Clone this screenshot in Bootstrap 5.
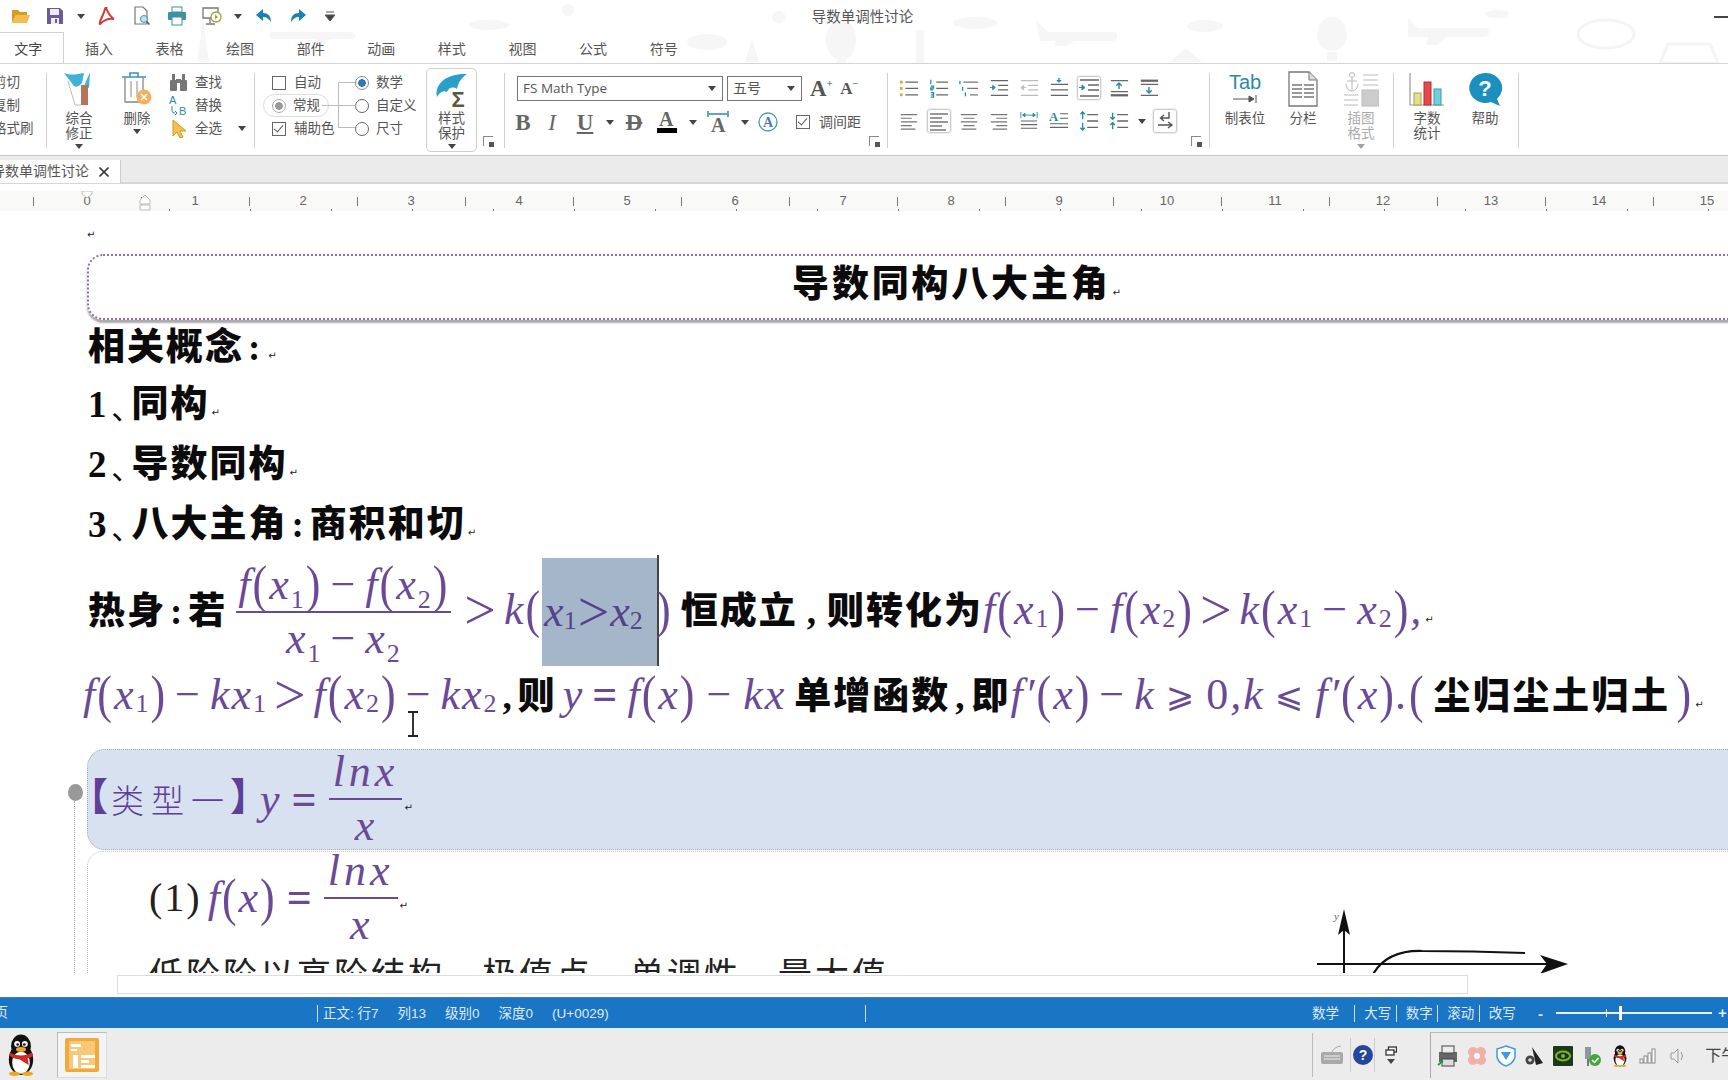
<!DOCTYPE html>
<html lang="zh">
<head>
<meta charset="utf-8">
<title>导数单调性讨论</title>
<link rel="stylesheet" href="https://cdn.jsdelivr.net/npm/bootstrap@5.3.0/dist/css/bootstrap.min.css">
<style>
html,body{margin:0;height:1080px;overflow:hidden;background:#fff}
body{width:1728px;font-family:"Liberation Sans","Noto Sans CJK SC",sans-serif;color:#555;font-size:14px;display:flex;flex-direction:column}
svg{display:block;flex:none}
.cell{display:flex;align-items:center;justify-content:center;flex:none}
/* title */
.wtop{height:63px;position:relative;flex:none;background:#fff;overflow:hidden}
.sky{position:absolute;left:0;top:0}
.qbar{height:32px;display:flex;padding-left:4px;position:relative}
.w12{width:12px}.w18{width:18px}.w20{width:20px}.w26{width:26px}.w28{width:28px}.w34{width:34px}.w36{width:36px}.w38{width:38px}.w40{width:40px}.w42{width:42px}.w46{width:46px}
.ml2{margin-left:2px}.ml4{margin-left:4px}.ml7{margin-left:7px}.ml9{margin-left:9px}.ml11{margin-left:11px}.ml18{margin-left:18px}
.wtitle{position:absolute;left:0;right:0;top:7px;text-align:center;font-size:14.5px;color:#555;padding-right:3px}
.wmin{position:absolute;right:0;top:16px;width:14px;height:2px;background:#444}
.car{width:0;height:0;border-left:4px solid transparent;border-right:4px solid transparent;border-top:5px solid #444;flex:none}
.tabs{--bs-nav-tabs-border-width:0;height:31px;position:relative;flex-wrap:nowrap;border:0}
.tabs .nav-item{width:70.6px;flex:none}
.tabs .nav-item:first-child{margin-left:-7px}
.tabs .nav-link{padding:7px 0 0;height:31px;text-align:center;color:#555;font-size:14px;border:0;border-radius:0;background:transparent}
.tabs .nav-link.active{background:#fff;color:#444;border:1px solid #d0d0d0;border-bottom:0;padding-top:6px;height:32px}
/* ribbon */
.rib{height:93px;display:flex;border-top:1px solid #d4d4d4;border-bottom:1px solid #c6c6c6;background:#fff;flex:none}
.grp{flex:none;display:flex;height:91px;position:relative}
.grp::after{content:"";position:absolute;right:0;top:9px;height:75px;width:1px;background:#cfcfcf}
.g1{width:47px}.g2{width:208px}.g3{width:250px}.g4{width:383px}.g5{width:322px}.g6{width:184px}.g7{width:125px}
.clip{width:37px;overflow:hidden;display:flex;flex-direction:column;align-items:flex-start;padding-top:7px;white-space:nowrap}
.clip .rw{margin-left:-7px}
.rw{height:23px;line-height:23px;font-size:13.5px;display:flex;align-items:center;white-space:nowrap}
.big{display:flex;flex-direction:column;align-items:center;flex:none;padding-top:7px;font-size:13.5px;line-height:15px;text-align:center}
.big>svg{margin-bottom:4px}
.big .car{margin-top:3px}
.bw64{width:64px}.bw52{width:52px}.bw58{width:58px}
.lst{width:92px;padding-top:7px;flex:none}
.lst .ico{width:32px;display:flex;justify-content:center}
.colc{width:76px;padding:7px 0 0 9px;flex:none}
.chk{width:14px;height:14px;border:1.5px solid #666;flex:none;background:#fff;position:relative}
.chk.on::after{content:"";position:absolute;left:3px;top:0;width:5px;height:9px;border:solid #555;border-width:0 1.5px 1.5px 0;transform:rotate(40deg)}
.pill{border:1.5px solid #ddd;border-radius:12px;margin-left:-1px;width:66px}
.colr{width:95px;padding-top:7px;flex:none;position:relative}
.rad{width:14px;height:14px;border:1.5px solid #666;border-radius:50%;margin:0 7px 0 14px;flex:none;background:#fff}
.colr .rad{margin-left:14px}
.colr .rw{padding-left:10px}
.rad.on{border-color:#888;background:radial-gradient(circle,#2a78c0 0 3.6px,#fff 4px)}
.rad.gr{border-color:#aaa;background:radial-gradient(circle,#999 0 3.6px,#fff 4px);margin:0 7px 0 5px}
.rtree{position:absolute;left:7px;top:18px;width:17px;height:46px;border:1px solid #bbb;border-right:0}
.rtree::before{content:"";position:absolute;left:-17px;top:22px;width:34px;height:1px;background:#bbb}
.styl{width:51px;height:84px;margin-top:4px;border:1px solid #cfcfcf;border-radius:5px;display:flex;flex-direction:column;align-items:center;padding-top:2px;font-size:13.5px;line-height:15px;text-align:center;flex:none}
.styl>svg{margin-bottom:2px}.styl .car{margin-top:3px}
.lnch{position:absolute;bottom:9px;width:10px;height:10px;border:1px solid #888;border-width:1px 0 0 1px}
.lnch::after{content:"";position:absolute;right:-1px;bottom:-1px;width:5px;height:5px;background:#555}
.l3{right:12px}.l4{right:9px}.l5{right:9px}
.fg{padding:11px 0 0 12px;flex:none}
.frow{display:flex;align-items:center;height:26px}
.frow2{margin-top:8px;height:26px}
.sel{height:25px;border:1.5px solid #777;display:flex;align-items:center;justify-content:space-between;padding:0 6px 0 5px;font-size:14px;color:#555;flex:none}
.s1{width:206px;margin-right:4px;font-family:"Open Sans","Liberation Sans",sans-serif;font-size:13.5px}.s2{width:75px}
.aup{font-family:"Liberation Serif",serif;font-weight:700;font-size:23px;color:#555;line-height:1}
.ad{font-size:17px}
.sp{font-size:10px;color:#2b8aa8;vertical-align:super;font-weight:700}
.fl{font-family:"Liberation Serif",serif;font-size:23px;font-weight:700;color:#666;line-height:1}
.flt{font-weight:400;font-style:italic}
.ftx{font-size:14px;margin-left:9px}
.pg{padding:11px 0 0 6px;flex:none}
.prow{display:flex;align-items:center;height:26px}
.prow2{margin-top:7px}
.pc{width:30px;display:flex;justify-content:center;flex:none}
.pc.bx svg{border:1px solid #ccc;border-radius:3px;box-shadow:0 0 0 1px #eee}
.g6 .big,.g7 .big{color:#555}.dis{color:#aaa}
.g6 .dis{color:#aaa}
.pl6{padding-left:6px}.pl4{padding-left:4px}
/* tab strip, ruler */
.dtabs{height:28px;background:#ebebeb;border-bottom:2px solid #d6d6d6;display:flex;align-items:flex-end;flex:none}
.dtab{width:121px;height:23px;background:#fff;display:flex;align-items:center;justify-content:flex-end;overflow:hidden;white-space:nowrap;padding-right:10px;font-size:14px;color:#555;border-right:1px solid #ccc;margin-bottom:-1px}
.dtab b{font-weight:400;margin-right:9px}
.rgap{height:7px;background:#fff;flex:none}
.ruler{height:20px;background:#f9f9f7;display:flex;padding-left:6px;position:relative;flex:none;color:#666;font-size:13px;overflow:hidden;background-image:repeating-linear-gradient(90deg,#777 0 1px,transparent 1px 81px);background-size:100% 2px;background-repeat:no-repeat;background-position:169px 100%}
.ruler span{width:54px;flex:none;text-align:center;line-height:20px}
.ruler .tk{position:relative}
.ruler .tk::after{content:"";position:absolute;left:50%;top:6px;width:1px;height:9px;background:#777}
.rmk1{position:absolute;left:81px;top:0}.rmk2{position:absolute;left:139px;top:3px}
/* doc */
.docv{height:762px;flex:none;overflow:hidden;position:relative;background:#fff}
.rm{font-family:"DejaVu Sans",sans-serif;font-size:10px;color:#222;font-weight:400;line-height:1;flex:none;font-style:normal}
.topmk{height:43px;padding:12px 0 0 87px}
.ttlb{height:66px;margin:0 -30px 0 87px;border:2px dotted #8f6fa8;border-right:0;border-radius:16px 0 0 16px;box-shadow:0 3px 2px #aaa;display:flex;align-items:center;justify-content:center;padding:0 0 4px 66px}
.ln{display:flex;align-items:center;white-space:nowrap;color:#0b0b0b;font-family:"Liberation Serif","Noto Sans CJK SC",serif;font-weight:900;font-size:37px;letter-spacing:2px;padding-left:88px}
.ttl{font-family:"Liberation Serif","Noto Sans CJK SC",serif;font-weight:900;font-size:37px;letter-spacing:2.8px;color:#0b0b0b}
.cl{margin:0 4px}.cl5{margin:0 5px}.cl9{margin:0 9px}
.dun{font-size:30px;font-weight:400;font-family:"Noto Sans CJK SC",sans-serif;font-feature-settings:"palt";margin:2px 5px 0 3px;letter-spacing:0;flex:none}
.h55{height:55px}.h60{height:60px}
.rm2{margin:16px 0 0 2px;letter-spacing:0}
.hot{height:106px;margin-top:4px}
.ln2{height:64px;padding-left:83px}
.m{font-family:"Liberation Serif",serif;font-style:italic;font-weight:400;color:#6a4a96;font-size:44px;line-height:1;letter-spacing:2px;display:inline-flex;align-items:center;flex:none}
.ln>.m:not(.frc){margin-bottom:4px}
.m i{font-style:normal}
.m sub{font-size:26px;bottom:-.35em;font-style:normal;line-height:0}
.pr{display:inline-block;transform:scaleY(1.22);font-style:normal;font-weight:400}
.op{font-style:normal;margin:0 8px}
.op2{font-style:normal;margin:0 10px}
.gt{font-style:normal;margin:0 6px;font-family:"Liberation Serif",serif;font-size:56px;line-height:1}
.gts{font-style:normal;margin:0 10px;font-family:"DejaVu Sans",sans-serif;font-size:34px}
.eq{font-style:normal;margin:0 8px;font-weight:700}
.eq2{font-style:normal;margin:0 10px;font-weight:700}
.frc{display:inline-flex;flex-direction:column;align-items:center;vertical-align:middle;flex:none}
.fnu{border-bottom:2px solid #6a4a96;padding:0 2px 1px;display:flex;justify-content:center;width:100%;line-height:50px;white-space:nowrap}
.fde{display:flex;line-height:52px;white-space:nowrap}
.lnx{letter-spacing:4px;padding:0 4px 1px}
.frr{margin-right:7px}
.selb{background:#a6b6ca;height:108px;width:117px;border-right:2px solid #444;display:flex;align-items:center;flex:none;padding-left:2px;position:relative}
.selb::after{content:"";position:absolute;right:-2px;top:-3px;height:3px;width:2px;background:#444}
.selm{color:#53448a;letter-spacing:0}
.selm .gt{margin:0 1px}
.clp{margin-left:-3px}
.cn{margin-left:8px}
.mrg8{margin-left:9px}.mrg5{margin-left:6px}.mrg10{margin-left:8px}
.ls25{letter-spacing:2.5px}
.ibeam{position:absolute;left:407px;top:500px}
.typ{height:101px;margin:20px -30px 0 87px;background:#d7e1ef;border:1px dotted #aab;border-right:0;border-radius:18px 0 0 18px;display:flex;align-items:center;white-space:nowrap;font-size:33px;color:#5f3d98}
.typ>.fnt{font-family:"Noto Sans CJK SC",sans-serif;font-weight:300;display:flex;letter-spacing:7px;margin-right:10px}
.brk{font-weight:900;flex:none;display:inline-block;letter-spacing:0;font-size:38px;font-feature-settings:"palt";line-height:1}
.brkl{margin-right:4px}
.tdot{position:absolute;left:68px;top:573px;width:15px;height:17px;border-radius:50%;background:#999}
.tline{position:absolute;left:74px;top:590px;height:200px;border-left:1px dotted #aaa}
.sec{border-left:1px dotted #bbb;border-top:1px dotted #ccc;border-radius:16px 0 0 0;margin:1px 0 0 87px;height:300px}
.s1l{height:92px;display:flex;align-items:center;padding-left:61px;white-space:nowrap}
.s1n{font-family:"Liberation Serif",serif;font-size:40px;color:#222;font-weight:400;margin-right:6px;letter-spacing:2px}
.s2l{font-family:"Noto Sans CJK SC",sans-serif;font-size:34px;color:#222;padding-left:61px;line-height:1;margin-top:12px;white-space:nowrap;letter-spacing:3px}
.gr1{position:absolute;left:1300px;top:695px}
/* scroll, status, taskbar */
.scw{height:24px;background:#fff;padding:2px 0 0 117px;flex:none}
.sct{width:1351px;height:19px;border:1.5px solid #ddd;background:#fff}
.stat{height:31px;background:#1a75c4;color:#dfeaf5;display:flex;align-items:center;font-size:13.5px;flex:none;white-space:nowrap;position:relative;border-top:1px solid #3a7fb0}
.sl{flex:none}
.sa{width:8px;overflow:hidden;direction:rtl}
.sb{margin-left:309px;border-left:1px solid #cde;padding-left:5px;line-height:17px;width:548px}
.sb em{font-style:normal;margin-right:19px}
.sc{border-left:1px solid #cde;height:17px;width:434px;flex:none}
.sk{text-align:center;flex:none;line-height:17px;padding-left:5px}
.skb{border-left:1px solid #cde}
.sw40{width:48px;margin-right:7px}.sw42{width:41.5px}
.zmt{width:14px;font-size:15px;margin-left:11px;font-weight:700}
.zbar{width:156px;height:2px;background:#e8f0f8;margin-left:11px;position:relative;flex:none}
.zbar::before{content:"";position:absolute;left:50px;top:-3px;width:1px;height:8px;background:#e8f0f8}
.zbar::after{content:"";position:absolute;left:63px;top:-6px;width:3px;height:14px;background:#fff}
.zp{margin-left:6px;font-weight:700;font-size:15px}
.tbar{flex:1;background:#ececec;display:flex;align-items:center;position:relative;overflow:hidden;border-top:2px solid #e4f1f7;white-space:nowrap}
.taskb{width:50px;height:46px;background:#f4f4f4;border:1px solid #bbb;border-right-color:#ddd;border-bottom-color:#ddd;display:flex;align-items:center;justify-content:center;flex:none;margin-left:19px}
.tsep1{height:44px;width:1px;background:#bbb;margin-left:1205px;flex:none}
.tico{flex:none;display:flex;align-items:center;justify-content:center}
.trw{width:37px}.trw2{width:24px;border-left:1px solid #ccc;height:34px}
.trw3{width:32px;border-left:1px solid #ccc;height:34px;flex-direction:column;gap:3px}
.tray{margin-left:24px;height:46px;border-left:1px solid #aaa;border-top:1px solid #bbb;display:flex;align-items:center;flex:none;padding-left:3px;width:320px}
.tri{width:28.7px;display:flex;justify-content:center;flex:none}
.tim{font-size:16px;color:#444;margin-left:13px}
</style>
</head>
<body>
<svg width="0" height="0" class="position-absolute">
  <defs>
    <symbol id="bul" viewBox="0 0 22 22"><g fill="#d9a441"><rect x="1" y="3" width="3" height="3"/><rect x="1" y="10" width="3" height="3"/><rect x="1" y="17" width="3" height="3"/></g><path d="M7 4.500h14M7 11.500h14M7 18.500h14" stroke="#666" stroke-width="1.400"/></symbol>
    <symbol id="num" viewBox="0 0 22 22"><g stroke="#2b8aa8" stroke-width="1.400" fill="none"><path d="M2 2v5M2 9h3v2H2v2h3M2 16h3v5H2M2 18.500h3"/></g><path d="M8 4.500h13M8 11.500h13M8 18.500h13" stroke="#666" stroke-width="1.400"/></symbol>
    <symbol id="mul" viewBox="0 0 22 22"><path d="M1 3v4M4 10v4M7 16v4" stroke="#2b8aa8" stroke-width="1.400"/><path d="M5 4.500h16M9 11.500h12M12 18.500h9" stroke="#777" stroke-width="1.400"/></symbol>
    <symbol id="ind" viewBox="0 0 22 22"><path d="M2 3h19M10 8h11M10 13h11M2 19h19" stroke="#666" stroke-width="1.400"/><path d="M1 10.500h5M4 8l3 2.500-3 2.500z" stroke="#2b8aa8" fill="#2b8aa8"/></symbol>
    <symbol id="ded" viewBox="0 0 22 22"><path d="M2 3h19M10 8h11M10 13h11M2 19h19" stroke="#bbb" stroke-width="1.400"/><path d="M8 10.500H3M5 8l-3 2.500 3 2.500z" stroke="#bbb" fill="#bbb"/></symbol>
    <symbol id="sps" viewBox="0 0 22 22"><path d="M2 7h19M2 13h19M2 19h19" stroke="#666" stroke-width="1.400"/><path d="M11 0v5M8.500 3h5" stroke="#2b8aa8" stroke-width="1.600"/></symbol>
    <symbol id="pup" viewBox="0 0 22 22"><path d="M2 3h19M2 15h19" stroke="#666" stroke-width="1.400"/><path d="M2 19h19" stroke="#666" stroke-width="2.500"/><path d="M11 12V6M8 8.500l3-3 3 3" stroke="#2b8aa8" stroke-width="1.600" fill="none"/></symbol>
    <symbol id="pdn" viewBox="0 0 22 22"><path d="M2 3h19" stroke="#666" stroke-width="2.500"/><path d="M2 7h19M2 19h19" stroke="#666" stroke-width="1.400"/><path d="M11 10v6M8 13.500l3 3 3-3" stroke="#2b8aa8" stroke-width="1.600" fill="none"/></symbol>
    <symbol id="al" viewBox="0 0 22 22"><path d="M2 4h18M2 8h12M2 12h18M2 16h12M2 20h16" stroke="#777" stroke-width="1.300"/></symbol>
    <symbol id="ac" viewBox="0 0 22 22"><path d="M2 4h18M5 8h12M2 12h18M5 16h12M3 20h16" stroke="#777" stroke-width="1.300"/></symbol>
    <symbol id="ar" viewBox="0 0 22 22"><path d="M2 4h18M8 8h12M2 12h18M8 16h12M4 20h16" stroke="#777" stroke-width="1.300"/></symbol>
    <symbol id="aj" viewBox="0 0 22 22"><path d="M2 11h18M2 15h18M2 19h18" stroke="#666" stroke-width="1.300"/><path d="M2 1v7M20 1v7M4 4.500h14M4 4.500l2.500-2v4zM18 4.500l-2.500-2v4z" stroke="#2b8aa8" fill="#2b8aa8"/></symbol>
    <symbol id="ad" viewBox="0 0 22 22"><text x="0" y="11" font-family="Liberation Serif" font-weight="700" font-size="14" fill="#2b8aa8">A</text><path d="M12 3h9M12 8h9M1 14h20M1 18h20" stroke="#666" stroke-width="1.300"/></symbol>
    <symbol id="ls1" viewBox="0 0 22 22"><path d="M9 4h12M9 11h12M9 18h12" stroke="#666" stroke-width="1.400"/><path d="M4 1v8M1.500 3.500 4 1l2.500 2.500M4 13v8M1.500 18.500 4 21l2.500-2.500" stroke="#2b8aa8" stroke-width="1.500" fill="none"/></symbol>
    <symbol id="ls2" viewBox="0 0 22 22"><path d="M9 4h12M9 11h12M9 18h12" stroke="#666" stroke-width="1.400"/><path d="M4 2v7M1.500 6.500 4 9l2.500-2.500M4 20v-7M1.500 15.500 4 13l2.500 2.500" stroke="#2b8aa8" stroke-width="1.500" fill="none"/></symbol>
    <symbol id="wrp" viewBox="0 0 22 22"><path d="M15 2v6H7M10 5 6.500 8l3.500 3M4 15h14M14 12l4 3-4 3" stroke="#555" stroke-width="1.400" fill="none"/></symbol>
    <symbol id="qq" viewBox="0 0 30 38"><ellipse cx="15" cy="23" rx="11" ry="14" fill="#111"/><ellipse cx="15" cy="11" rx="9" ry="10.500" fill="#111"/><ellipse cx="15" cy="26" rx="8" ry="10" fill="#fff"/><circle cx="11.500" cy="9" r="2.600" fill="#fff"/><circle cx="18.500" cy="9" r="2.600" fill="#fff"/><circle cx="12" cy="9.500" r="1.200" fill="#111"/><circle cx="18" cy="9.500" r="1.200" fill="#111"/><ellipse cx="15" cy="14" rx="4.500" ry="2.200" fill="#f2a51f"/><path d="M5 17q10 5 20 0l1 3q-3 2-5 2l1 6-5-3-3-2q-5 0-9-3z" fill="#d42a22"/><ellipse cx="9" cy="36" rx="5" ry="2" fill="#f2a51f"/><ellipse cx="21" cy="36" rx="5" ry="2" fill="#f2a51f"/></symbol>
  </defs>
</svg>

<div class="wtop">
  <svg class="sky" width="1728" height="63" viewBox="0 0 1728 63" fill="#f6f6f6" stroke="none">
    <path d="M197 62l4-28 2-16 2 16 4 28z"/><path d="M270 32h80q12 3 2 7h-22l-6 6h-10l2-6h-46z"/>
    <ellipse cx="489" cy="25" rx="20" ry="5"/><ellipse cx="568" cy="10" rx="6" ry="6"/><ellipse cx="707" cy="42" rx="20" ry="8"/>
    <path d="M745 62l7-22 7 22z"/><ellipse cx="841" cy="40" rx="15" ry="20"/><rect x="836" y="60" width="10" height="3"/>
    <rect x="916" y="30" width="8" height="33"/><ellipse cx="779" cy="17" rx="7" ry="6"/><ellipse cx="975" cy="23" rx="22" ry="6"/>
    <path d="M1036 20l12 12h68q4 5-2 9h-40l-8 5h-12l2-5h-16z"/><path d="M1170 62l16-14 16 14z"/><ellipse cx="1205" cy="26" rx="18" ry="6"/>
    <ellipse cx="1332" cy="34" rx="15" ry="17"/><rect x="1327" y="52" width="10" height="9"/>
    <path d="M1408 18l10 10h70q4 5-2 9h-40l-8 8h-12l2-8h-20z"/><ellipse cx="1497" cy="14" rx="12" ry="4"/>
    <ellipse cx="1606" cy="34" rx="28" ry="14" fill="none" stroke="#f4f4f4" stroke-width="3"/><path d="M1668 44h42l8 19h-58z" fill="none" stroke="#f4f4f4" stroke-width="3"/>
  </svg>
  <div class="wtitle">导数单调性讨论</div>
  <div class="wmin"></div>
  <div class="qbar">
    <div class="cell w34"><svg width="20" height="18" viewBox="0 0 20 18"><path d="M1 3h6l2 2h7v3H5L1 16z" fill="#d89a22"/><path d="M5 8h14l-3 8H1z" fill="#f0bd4e"/></svg></div>
    <div class="cell w34"><svg width="18" height="18" viewBox="0 0 18 18"><path d="M1 1h13l3 3v13H1z" fill="#6c5a9a"/><rect x="4" y="2" width="9" height="6" fill="#efeaf6"/><rect x="5" y="11" width="8" height="6" fill="#efeaf6"/><rect x="9" y="12" width="2" height="4" fill="#6c5a9a"/></svg></div>
    <div class="cell w18"><span class="car"></span></div>
    <div class="cell w34"><svg width="20" height="18" viewBox="0 0 20 18" fill="none"><path d="M9 1c2 4 3 8 8 11-5-1-10 1-14 5-2-1 3-7 5-15 1-3 2-2 1-1z" stroke="#d33a33" stroke-width="2"/></svg></div>
    <div class="cell w36"><svg width="20" height="20" viewBox="0 0 20 20" fill="none"><path d="M3 1h8l4 4v13H3z" fill="#fff" stroke="#777" stroke-width="1.200"/><circle cx="12" cy="13" r="3.500" fill="#bfe0ee" stroke="#4a94b4"/><path d="M14.500 15.500l3 3" stroke="#555" stroke-width="1.500"/></svg></div>
    <div class="cell w34"><svg width="20" height="20" viewBox="0 0 20 20"><rect x="5" y="1" width="10" height="5" fill="#fff" stroke="#3c91a8"/><rect x="1" y="6" width="18" height="8" rx="1" fill="#3c91a8"/><rect x="5" y="11" width="10" height="8" fill="#fff" stroke="#3c91a8"/></svg></div>
    <div class="cell w38"><svg width="22" height="20" viewBox="0 0 22 20" fill="none"><path d="M1 2h15v10H1zM8 12v5M4 18h9" stroke="#777" stroke-width="1.300"/><circle cx="14" cy="11" r="5" fill="#fff" stroke="#9aa23c" stroke-width="1.300"/><path d="M13 8.500l3 2.500-3 2.500z" fill="#9aa23c"/></svg></div>
    <div class="cell w12"><span class="car"></span></div>
    <div class="cell w40"><svg width="18" height="16" viewBox="0 0 18 16"><path d="M8 1 1 7l7 6V9c4 0 6 2 8 5 0-6-3-9-8-9z" fill="#1b7fb6"/></svg></div>
    <div class="cell w28"><svg width="18" height="16" viewBox="0 0 18 16"><path d="M10 1l7 6-7 6V9C6 9 4 11 2 14 2 8 5 5 10 5z" fill="#1b7fb6"/></svg></div>
    <div class="cell w36"><svg width="10" height="12" viewBox="0 0 10 12"><path d="M1 2h8M0 5h10l-5 6z" stroke="#555" fill="#444"/></svg></div>
  </div>
  <ul class="nav nav-tabs tabs">
    <li class="nav-item"><a class="nav-link active" href="#">文字</a></li>
    <li class="nav-item"><a class="nav-link" href="#">插入</a></li>
    <li class="nav-item"><a class="nav-link" href="#">表格</a></li>
    <li class="nav-item"><a class="nav-link" href="#">绘图</a></li>
    <li class="nav-item"><a class="nav-link" href="#">部件</a></li>
    <li class="nav-item"><a class="nav-link" href="#">动画</a></li>
    <li class="nav-item"><a class="nav-link" href="#">样式</a></li>
    <li class="nav-item"><a class="nav-link" href="#">视图</a></li>
    <li class="nav-item"><a class="nav-link" href="#">公式</a></li>
    <li class="nav-item"><a class="nav-link" href="#">符号</a></li>
  </ul>
</div>

<div class="rib">
  <div class="grp g1"><div class="clip"><div class="rw">剪切</div><div class="rw">复制</div><div class="rw">格式刷</div></div></div>
  <div class="grp g2">
    <div class="big bw64">
      <svg width="32" height="36" viewBox="0 0 32 36"><path d="M1 2c8 3 13 1 20 0l-2 10c-2 2-5 5-8 3z" fill="#3fb2d6"/><path d="M27 1l-6 14 5 2z" fill="#3fb2d6"/><rect x="18" y="14" width="7" height="20" fill="#b4745a"/><path d="M5 10l7 24h6" stroke="#bbb" fill="none"/></svg>
      <span>综合<br>修正</span><span class="car"></span>
    </div>
    <div class="big bw52">
      <svg width="32" height="36" viewBox="0 0 32 36" fill="none"><path d="M1 6h24M9 6V2h8v4" stroke="#3a95b4" stroke-width="1.600"/><path d="M4 6v25h18V6" stroke="#888" stroke-width="1.300"/><path d="M10 10v16M16 10v16" stroke="#888"/><circle cx="23" cy="26" r="7.500" fill="#f2b15e"/><path d="M20 23l6 6M26 23l-6 6" stroke="#fff" stroke-width="1.500"/></svg>
      <span>删除</span><span class="car"></span>
    </div>
    <div class="lst">
      <div class="rw"><span class="ico"><svg width="20" height="19" viewBox="0 0 20 19" fill="#777"><rect x="1" y="7" width="7" height="11" rx="1"/><rect x="11" y="7" width="7" height="11" rx="1"/><rect x="3" y="1" width="3" height="7"/><rect x="13" y="1" width="3" height="7"/><rect x="7" y="6" width="5" height="4"/></svg></span>查找</div>
      <div class="rw"><span class="ico"><svg width="20" height="21" viewBox="0 0 20 21" fill="none"><text x="0" y="9" font-family="Liberation Sans" font-size="11" fill="#2b8aa8">A</text><text x="10" y="20" font-family="Liberation Sans" font-size="11" fill="#2b8aa8">B</text><path d="M3 11v5q0 2 3 2M6 16l2 2-2 2" stroke="#2b8aa8"/></svg></span>替换</div>
      <div class="rw"><span class="ico"><svg width="16" height="20" viewBox="0 0 16 20"><path d="M2 1v16l4-4 3 6 3-1-3-6h6z" fill="#f2c14e" stroke="#c99a2e"/></svg></span>全选<span class="car ms-3"></span></div>
    </div>
  </div>
  <div class="grp g3">
    <div class="colc">
      <div class="rw"><span class="chk ms-2 me-2"></span>自动</div>
      <div class="rw pill"><span class="rad gr ms-2"></span>常规</div>
      <div class="rw"><span class="chk on ms-2 me-2"></span>辅助色</div>
    </div>
    <div class="colr">
      <span class="rtree"></span>
      <div class="rw"><span class="rad on"></span>数学</div>
      <div class="rw"><span class="rad"></span>自定义</div>
      <div class="rw"><span class="rad"></span>尺寸</div>
    </div>
    <div class="styl">
      <svg width="36" height="38" viewBox="0 0 36 38"><path d="M3 26C0 12 14 2 33 3 27 7 24 12 23 18c-4-3-9-1-10 3-4-2-7 0-10 5z" fill="#2b9fca"/><text x="24" y="36" text-anchor="middle" font-family="Liberation Sans" font-weight="700" font-size="22" fill="#5a5a3c">Σ</text></svg>
      <span>样式<br>保护</span><span class="car"></span>
    </div>
    <span class="lnch l3"></span>
  </div>
  <div class="grp g4">
    <div class="fg">
      <div class="frow">
        <div class="sel s1"><span>FS Math Type</span><span class="car"></span></div>
        <div class="sel s2"><span>五号</span><span class="car"></span></div>
        <span class="aup ms-2">A<span class="sp">+</span></span>
        <span class="aup ad ms-2">A<span class="sp">−</span></span>
      </div>
      <div class="frow frow2">
        <span class="fl cell w12">B</span>
        <span class="fl flt cell w46">I</span>
        <span class="fl cell w20 text-decoration-underline">U</span>
        <span class="car ml11"></span>
        <span class="fl cell w40 text-decoration-line-through">D</span>
        <span class="cell w26"><svg width="24" height="24" viewBox="0 0 24 24"><text x="4" y="16" font-family="Liberation Serif" font-weight="700" font-size="20" fill="#666">A</text><rect x="2" y="18" width="20" height="5" fill="#000"/></svg></span>
        <span class="car ml9"></span>
        <span class="cell w42"><svg width="24" height="24" viewBox="0 0 24 24"><path d="M2 1v6M22 1v6M3 4h18" stroke="#2b8aa8" stroke-width="1.500"/><text x="5" y="22" font-family="Liberation Serif" font-weight="700" font-size="20" fill="#666">A</text></svg></span>
        <span class="car ml2"></span>
        <svg class="ml9" width="20" height="20" viewBox="0 0 20 20"><circle cx="10" cy="10" r="9" fill="none" stroke="#4a9ab4" stroke-width="1.300"/><text x="5" y="15" font-family="Liberation Serif" font-weight="700" font-size="14" fill="#4a7ab4">A</text></svg>
        <span class="chk on ml18"></span><span class="ftx">调间距</span>
      </div>
    </div>
    <span class="lnch l4"></span>
  </div>
  <div class="grp g5">
    <div class="pg">
      <div class="prow">
        <span class="pc"><svg width="20" height="20"><use href="#bul"/></svg></span>
        <span class="pc"><svg width="20" height="20"><use href="#num"/></svg></span>
        <span class="pc"><svg width="20" height="20"><use href="#mul"/></svg></span>
        <span class="pc"><svg width="20" height="20"><use href="#ind"/></svg></span>
        <span class="pc"><svg width="20" height="20"><use href="#ded"/></svg></span>
        <span class="pc"><svg width="20" height="20"><use href="#sps"/></svg></span>
        <span class="pc bx"><svg width="24" height="24"><use href="#ind"/></svg></span>
        <span class="pc"><svg width="20" height="20"><use href="#pup"/></svg></span>
        <span class="pc"><svg width="20" height="20"><use href="#pdn"/></svg></span>
      </div>
      <div class="prow prow2">
        <span class="pc"><svg width="20" height="20"><use href="#al"/></svg></span>
        <span class="pc bx"><svg width="24" height="24"><use href="#al"/></svg></span>
        <span class="pc"><svg width="20" height="20"><use href="#ac"/></svg></span>
        <span class="pc"><svg width="20" height="20"><use href="#ar"/></svg></span>
        <span class="pc"><svg width="20" height="20"><use href="#aj"/></svg></span>
        <span class="pc"><svg width="20" height="20"><use href="#ad"/></svg></span>
        <span class="pc"><svg width="20" height="20"><use href="#ls1"/></svg></span>
        <span class="pc"><svg width="20" height="20"><use href="#ls2"/></svg></span>
        <span class="car ms-1"></span>
        <span class="pc bx ms-1"><svg width="24" height="24"><use href="#wrp"/></svg></span>
      </div>
    </div>
    <span class="lnch l5"></span>
  </div>
  <div class="grp g6 pl6">
    <div class="big bw58">
      <svg width="34" height="36" viewBox="0 0 34 36"><text x="17" y="18" text-anchor="middle" font-family="Liberation Sans" font-size="20" fill="#2b8aa8">Tab</text><path d="M5 28h20M21 25l5 3-5 3zM28 24v8" stroke="#555" fill="#555"/></svg>
      <span>制表位</span>
    </div>
    <div class="big bw58">
      <svg width="30" height="36" viewBox="0 0 30 36" fill="none"><path d="M1 1h20l8 8v26H1z" fill="#fff" stroke="#777" stroke-width="1.300"/><path d="M21 1v8h8" fill="#ddd" stroke="#777"/><path d="M4 14h10M16 14h10M4 18h10M16 18h10M4 22h10M16 22h10M4 26h10M16 26h10" stroke="#777" stroke-width="1.300"/></svg>
      <span>分栏</span>
    </div>
    <div class="big bw58 dis">
      <svg width="36" height="36" viewBox="0 0 36 36" fill="none" stroke="#bbb"><circle cx="9" cy="4" r="2.500"/><path d="M9 6v14M3 13q1 7 6 7 5 0 6-7M4 10h10"/><path d="M20 4h15M20 9h15M20 14h15M1 24h14M1 29h14M1 34h14"/><rect x="19" y="19" width="17" height="16" fill="#ccc"/></svg>
      <span>插图<br>格式</span><span class="car opacity-50"></span>
    </div>
  </div>
  <div class="grp g7 pl4">
    <div class="big bw58">
      <svg width="36" height="36" viewBox="0 0 36 36"><path d="M1 2v32h34" stroke="#999" stroke-width="1.200" fill="none"/><rect x="5" y="22" width="7" height="12" fill="#e6dd8d" stroke="#a9a14e"/><rect x="15" y="11" width="7" height="23" fill="#e8474c" stroke="#b02c30"/><rect x="25" y="18" width="7" height="16" fill="#6fd0dc" stroke="#3d9aa6"/></svg>
      <span>字数<br>统计</span>
    </div>
    <div class="big bw58">
      <svg width="36" height="36" viewBox="0 0 36 36"><path d="M18 2a16 15 0 1 0 6 29l9 4-3-7A16 15 0 0 0 18 2z" fill="#1b8fc0"/><text x="18" y="25" text-anchor="middle" font-family="Liberation Sans" font-weight="700" font-size="22" fill="#fff">?</text></svg>
      <span>帮助</span>
    </div>
  </div>
</div>

<div class="dtabs"><div class="dtab"><b>导数单调性讨论</b><svg width="12" height="12" viewBox="0 0 12 12"><path d="M1.500 1.500l9 9M10.500 1.500l-9 9" stroke="#333" stroke-width="1.700"/></svg></div></div>
<div class="rgap"></div>
<div class="ruler">
  <span class="tk"></span><span>0</span><span class="tk"></span><span>1</span><span class="tk"></span><span>2</span><span class="tk"></span><span>3</span><span class="tk"></span><span>4</span><span class="tk"></span><span>5</span><span class="tk"></span><span>6</span><span class="tk"></span><span>7</span><span class="tk"></span><span>8</span><span class="tk"></span><span>9</span><span class="tk"></span><span>10</span><span class="tk"></span><span>11</span><span class="tk"></span><span>12</span><span class="tk"></span><span>13</span><span class="tk"></span><span>14</span><span class="tk"></span><span>15</span>
  <svg class="rmk1" width="12" height="8" viewBox="0 0 12 8"><path d="M1 0h10v3L6 7 1 3z" fill="#fff" stroke="#bbb"/></svg>
  <svg class="rmk2" width="12" height="17" viewBox="0 0 12 17"><path d="M1 6l5-5 5 5v4H1zM1 11h10v5H1z" fill="#fff" stroke="#bbb"/></svg>
</div>

<div class="docv">
  <div class="topmk"><span class="rm">↵</span></div>
  <div class="ttlb"><span class="ttl">导数同构八大主角</span><span class="rm rm2">↵</span></div>
  <div class="ln h55">相关概念<span class="cl">:</span><span class="rm rm2">↵</span></div>
  <div class="ln h60">1<span class="dun">、</span>同构<span class="rm rm2">↵</span></div>
  <div class="ln h60">2<span class="dun">、</span>导数同构<span class="rm rm2">↵</span></div>
  <div class="ln h60">3<span class="dun">、</span>八大主角<span class="cl">:</span>商积和切<span class="rm rm2">↵</span></div>
  <div class="ln hot">热身<span class="cl">:</span>若
    <span class="m mrg8 frc frr"><span class="fnu"><span>f</span><span class="pr">(</span><span>x<sub>1</sub></span><span class="pr">)</span><span class="op">−</span><span>f</span><span class="pr">(</span><span>x<sub>2</sub></span><span class="pr">)</span></span><span class="fde"><span>x<sub>1</sub></span><span class="op">−</span><span>x<sub>2</sub></span></span></span>
    <span class="m"><span class="gt">&gt;</span>k<span class="pr">(</span></span>
    <span class="selb"><span class="m selm">x<sub>1</sub><span class="gt">&gt;</span>x<sub>2</sub></span></span>
    <span class="m clp"><span class="pr">)</span></span>
    <span class="cn">恒成立<span class="cl9">,</span>则转化为</span>
    <span class="m">f<span class="pr">(</span>x<sub>1</sub><span class="pr">)</span><span class="op">−</span>f<span class="pr">(</span>x<sub>2</sub><span class="pr">)</span><span class="gt">&gt;</span>k<span class="pr">(</span>x<sub>1</sub><span class="op">−</span>x<sub>2</sub><span class="pr">)</span>,</span>
    <span class="rm rm2">↵</span>
  </div>
  <div class="ln ln2">
    <span class="m">f<span class="pr">(</span>x<sub>1</sub><span class="pr">)</span><span class="op">−</span>kx<sub>1</sub><span class="gt">&gt;</span>f<span class="pr">(</span>x<sub>2</sub><span class="pr">)</span><span class="op">−</span>kx<sub>2</sub></span><span class="cl">,</span>则
    <span class="m mrg5">y<span class="eq">=</span>f<span class="pr">(</span>x<span class="pr">)</span><span class="op2">−</span>kx</span>
    <span class="mrg10">单增函数<span class="cl5">,</span>即</span>
    <span class="m">f′<span class="pr">(</span>x<span class="pr">)</span><span class="op">−</span>k<span class="gts">⩾</span><i>0</i>,k<span class="gts">⩽</span>f′<span class="pr">(</span>x<span class="pr">)</span>.<span class="pr">(</span></span>
    <span class="mrg10 ls25">尘归尘土归土</span>
    <span class="m mrg5"><span class="pr">)</span></span>
    <span class="rm rm2">↵</span>
  </div>
  <div class="typ"><span class="fnt"><span class="brk brkl">【</span><span>类型一</span><span class="brk">】</span></span>
    <span class="m">y<span class="eq2">=</span><span class="frc"><span class="fnu lnx">lnx</span><span class="fde">x</span></span></span><span class="rm rm2">↵</span></div>
  <div class="sec">
    <div class="s1l"><span class="s1n">(1)</span><span class="m">f<span class="pr">(</span>x<span class="pr">)</span><span class="eq2">=</span><span class="frc"><span class="fnu lnx">lnx</span><span class="fde">x</span></span></span><span class="rm rm2">↵</span></div>
    <div class="s2l">低阶阶以高阶结构、极值点、单调性、最大值</div>
  </div>
  <span class="tdot"></span><span class="tline"></span>
  <svg class="ibeam" width="12" height="26" viewBox="0 0 12 26"><path d="M1 1h10M6 1v24M1 25h10" stroke="#222" stroke-width="1.800" fill="none"/></svg>
  <svg class="gr1" width="280" height="70" viewBox="0 0 280 70"><path d="M44 70V14" stroke="#111" stroke-width="2"/><path d="M44 3l-6 26 6-5 6 5z" fill="#111"/><path d="M17 58h245" stroke="#111" stroke-width="2"/><path d="M240 49l28 9-28 10 7-10z" fill="#111"/><path d="M72 70q14-26 50-25 50 0 103 2" stroke="#111" stroke-width="2.200" fill="none"/><text x="34" y="14" font-family="Liberation Serif" font-style="italic" font-size="11" fill="#666">y</text></svg>
</div>

<div class="scw"><div class="sct"></div></div>
<div class="stat">
  <span class="sl sa">页</span>
  <span class="sl sb"><em>正文: 行7</em><em>列13</em><em>级别0</em><em>深度0</em>(U+0029)</span>
  <span class="sc"></span>
  <span class="sk sw40">数学</span>
  <span class="sk skb sw42">大写</span><span class="sk skb sw42">数字</span><span class="sk skb sw42">滚动</span><span class="sk skb sw42">改写</span>
  <span class="sk zmt">-</span><span class="zbar"></span><span class="zp">+</span>
</div>
<div class="tbar">
  <div class="cell w34 ml4"><svg width="34" height="42"><use href="#qq"/></svg></div>
  <div class="taskb"><svg width="38" height="38" viewBox="0 0 38 38"><rect x="2" y="2" width="34" height="34" rx="2" fill="#f2a93c"/><rect x="6" y="5" width="26" height="28" fill="#f7c877"/><path d="M8 8h10v3H8zM8 13h6v2H8z" fill="#fff"/><path d="M10 19h5v13h-5zM18 19h14v3H18zM18 24h8v3h-8zM18 29h14v3H18z" fill="#fff"/></svg></div>
  <span class="tsep1"></span>
  <span class="tico trw"><svg width="24" height="20" viewBox="0 0 24 20"><rect x="1" y="7" width="22" height="12" rx="2" fill="#aaa"/><path d="M4 11h16M4 14h16" stroke="#eee"/><path d="M12 7q2-5 9-6" stroke="#aaa" fill="none"/></svg></span>
  <span class="tico trw2"><svg width="22" height="22" viewBox="0 0 22 22"><circle cx="11" cy="11" r="10" fill="#24469c"/><text x="11" y="16" text-anchor="middle" font-family="Liberation Sans" font-weight="700" font-size="14" fill="#fff">?</text></svg></span>
  <span class="tico trw3"><svg width="12" height="10" viewBox="0 0 12 10" fill="#fff" stroke="#333" stroke-width="1.300"><rect x="3.500" y="1" width="8" height="5"/><rect x="1" y="4" width="8" height="5"/></svg><span class="car"></span></span>
  <div class="tray">
    <span class="tri"><svg width="22" height="22" viewBox="0 0 22 22"><rect x="2" y="7" width="18" height="10" fill="#666"/><rect x="5" y="1" width="12" height="7" fill="#eee" stroke="#444"/><rect x="5" y="14" width="12" height="7" fill="#ddd" stroke="#444"/><path d="M1 20l5-4" stroke="#2a9c3a" stroke-width="2"/></svg></span>
    <span class="tri"><svg width="20" height="20" viewBox="0 0 20 20" fill="#f0b0a8"><circle cx="6" cy="6" r="5"/><circle cx="14" cy="6" r="5"/><circle cx="6" cy="14" r="5"/><circle cx="14" cy="14" r="5"/><circle cx="10" cy="10" r="3" fill="#fff"/></svg></span>
    <span class="tri"><svg width="20" height="22" viewBox="0 0 20 22"><path d="M10 1l9 3v8q-2 7-9 9-7-2-9-9V4z" fill="#fff" stroke="#3f9ad8" stroke-width="1.500"/><path d="M5 7h10l-5 8z" fill="#3f9ad8"/></svg></span>
    <span class="tri"><svg width="20" height="20" viewBox="0 0 20 20"><path d="M8 1l11 16-7 2z" fill="#222"/><circle cx="6" cy="14" r="4.500" fill="#444"/><circle cx="6" cy="14" r="1.800" fill="#ddd"/></svg></span>
    <span class="tri"><svg width="20" height="20" viewBox="0 0 20 20"><rect width="20" height="20" rx="1" fill="#1b3a1b"/><ellipse cx="10" cy="10" rx="7" ry="4.500" fill="none" stroke="#7fb52a" stroke-width="2"/><circle cx="10" cy="10" r="2" fill="#7fb52a"/></svg></span>
    <span class="tri"><svg width="20" height="22" viewBox="0 0 20 22"><rect x="3" y="2" width="6" height="12" fill="#8a9a9a"/><path d="M6 14v7" stroke="#777" stroke-width="2"/><circle cx="13" cy="15" r="6" fill="#45a63c"/><path d="M10 15l2.500 2.500 4-4.500" stroke="#fff" stroke-width="1.500" fill="none"/></svg></span>
    <span class="tri"><svg width="18" height="22"><use href="#qq"/></svg></span>
    <span class="tri"><svg width="20" height="16" viewBox="0 0 20 16" fill="#fff" stroke="#888"><rect x="1" y="11" width="3" height="4"/><rect x="5" y="8" width="3" height="7"/><rect x="9" y="5" width="3" height="10"/><rect x="13" y="1" width="3" height="14"/></svg></span>
    <span class="tri"><svg width="16" height="18" viewBox="0 0 16 18" fill="none" stroke="#999"><path d="M1 6h3l4-4v14l-4-4H1zM11 5q3 4 0 8"/></svg></span>
    <span class="tim">下午</span>
  </div>
</div>
</body>
</html>
